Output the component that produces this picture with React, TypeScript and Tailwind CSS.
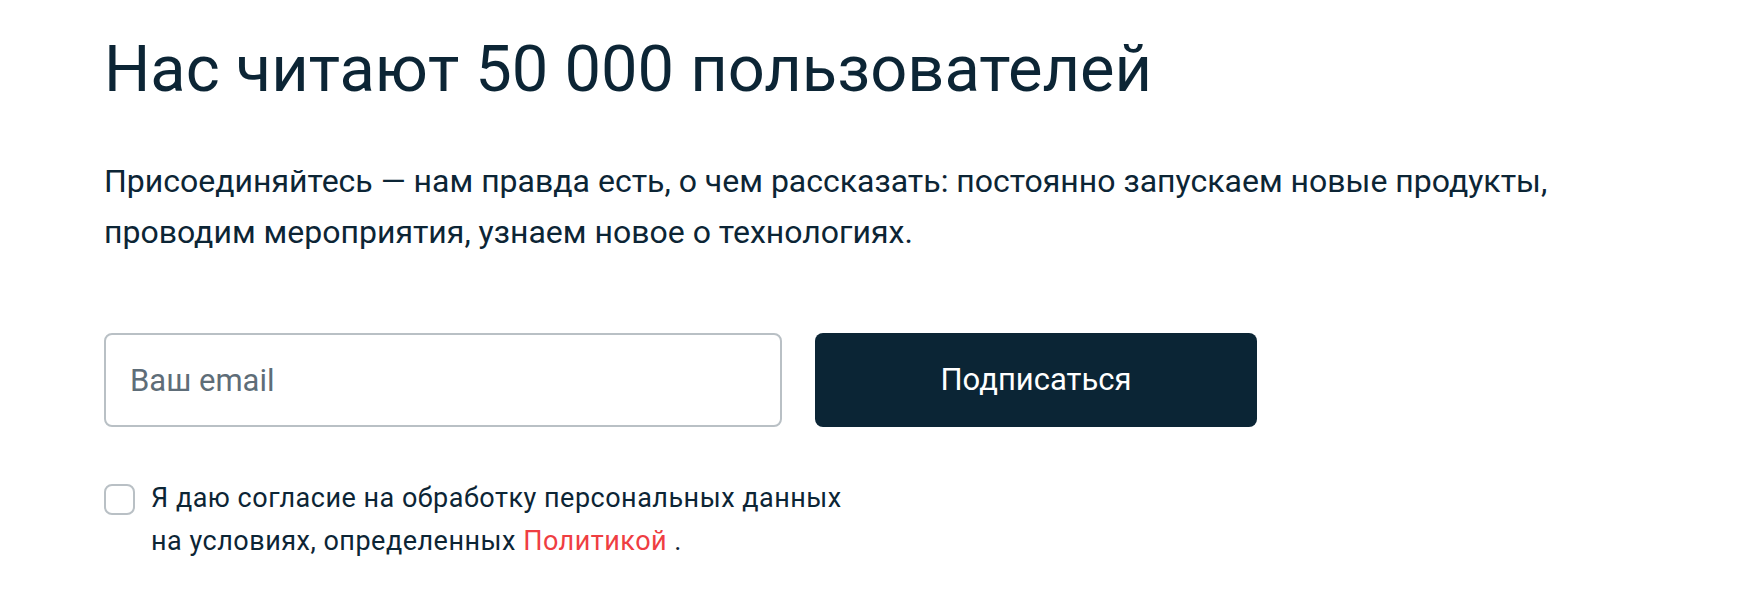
export default function App() {
  return (
    <section
      className="min-h-[604px] w-full bg-white pl-[104px] pt-[30px] text-[#0c2535]"
      style={{ fontFamily: "Roboto, 'Liberation Sans', sans-serif" }}
    >
      {/* Heading */}
      <h2 className="text-[65px] leading-[79px] font-normal">
        Нас читают 50 000 пользователей
      </h2>

      {/* Description */}
      <p className="mt-[47px] max-w-[1480px] text-[32px] leading-[51px]">
        Присоединяйтесь — нам правда есть, о чем рассказать: постоянно запускаем новые продукты,
        <br />
        проводим мероприятия, узнаем новое о технологиях.
      </p>

      {/* Form */}
      <form className="mt-[75px] flex items-center gap-[33px]">
        <input
          type="email"
          placeholder="Ваш email"
          className="h-[94px] w-[678px] rounded-[8px] border-[2px] border-[#b9c0c5] bg-white px-[24px] text-[31px] text-[#0c2535] outline-none placeholder:text-[#5e6d78]"
        />
        <button
          type="button"
          className="h-[94px] w-[442px] rounded-[8px] bg-[#0b2535] text-[31px] text-white"
        >
          Подписаться
        </button>
      </form>

      {/* Consent */}
      <label className="mt-[50px] flex items-start gap-[16px]">
        <span className="mt-[7px] h-[31px] w-[31px] shrink-0 rounded-[8px] border-[2px] border-[#b9c0c5] bg-white" />
        <span className="text-[27px] leading-[43px] tracking-[0.5px]">
          Я даю согласие на обработку персональных данных
          <br />
          на условиях, определенных <span className="text-[#ef3e42]">Политикой</span> .
        </span>
      </label>
    </section>
  );
}
